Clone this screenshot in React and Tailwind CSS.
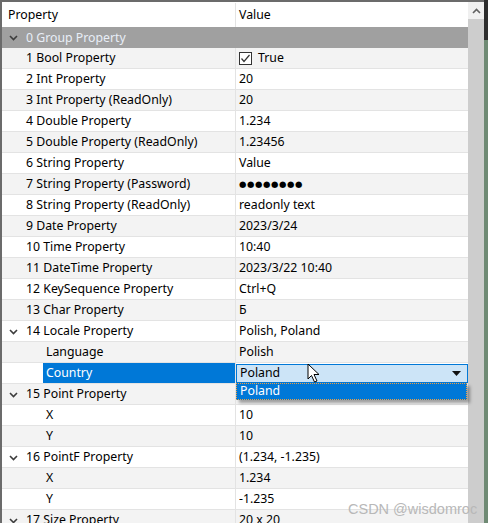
import React from "react";

const Chevron = () => (
  <svg width="9" height="6" viewBox="0 0 9 6" className="shrink-0">
    <polyline points="1,1 4.5,4.5 8,1" fill="none" stroke="#3c3c3c" strokeWidth="1.6" />
  </svg>
);

const rows = [
  { n: "1 Bool Property", v: "bool" },
  { n: "2 Int Property", v: "20" },
  { n: "3 Int Property (ReadOnly)", v: "20" },
  { n: "4 Double Property", v: "1.234" },
  { n: "5 Double Property (ReadOnly)", v: "1.23456" },
  { n: "6 String Property", v: "Value" },
  { n: "7 String Property (Password)", v: "pwd" },
  { n: "8 String Property (ReadOnly)", v: "readonly text" },
  { n: "9 Date Property", v: "2023/3/24" },
  { n: "10 Time Property", v: "10:40" },
  { n: "11 DateTime Property", v: "2023/3/22 10:40" },
  { n: "12 KeySequence Property", v: "Ctrl+Q" },
  { n: "13 Char Property", v: "Б" },
  { n: "14 Locale Property", v: "Polish, Poland", exp: true },
  { n: "Language", v: "Polish", child: true },
  { n: "Country", v: "combo", child: true, sel: true },
  { n: "15 Point Property", v: "", exp: true },
  { n: "X", v: "10", child: true },
  { n: "Y", v: "10", child: true },
  { n: "16 PointF Property", v: "(1.234, -1.235)", exp: true },
  { n: "X", v: "1.234", child: true },
  { n: "Y", v: "-1.235", child: true },
  { n: "17 Size Property", v: "20 x 20", exp: true },
];

function Value({ v }) {
  if (v === "bool")
    return (
      <div className="flex items-center gap-[6px] pl-[3px]">
        <svg width="13" height="13" viewBox="0 0 13 13">
          <rect x="0.5" y="0.5" width="12" height="12" fill="white" stroke="#333" />
          <polyline points="2.5,6.5 5,9.5 10.5,3" fill="none" stroke="#333" strokeWidth="1.2" />
        </svg>
        <span>True</span>
      </div>
    );
  if (v === "pwd")
    return (
      <span className="pl-[3px] text-[8.5px] tracking-[0.6px]" style={{ fontFamily: '"DejaVu Sans", sans-serif' }}>
        ●●●●●●●●
      </span>
    );
  if (v === "combo")
    return (
      <div className="flex h-full flex-1 items-center justify-between border border-[#0078d7] bg-[#cce4f7] pl-[3px] pr-[6px]">
        <span>Poland</span>
        <svg width="9" height="5" viewBox="0 0 9 5">
          <polygon points="0,0 9,0 4.5,5" fill="#111" />
        </svg>
      </div>
    );
  return <span className="pl-[3px]">{v}</span>;
}

export default function App() {
  return (
    <div
      className="flex h-[523px] w-[488px] overflow-hidden bg-[#4b5e50] text-[12.3px] text-black"
      style={{ fontFamily: '"Noto Sans", "Noto Sans CJK SC", sans-serif' }}
    >
      <div className="flex w-[484px] flex-col border-l-2 border-t-2 border-[#6b6b6b] bg-white">
        <div className="flex flex-1 overflow-hidden">
          <div className="relative flex w-[466px] flex-col">
            {/* header */}
            <div className="flex h-[25px] shrink-0 pt-[1px]">
              <div className="flex w-[234px] items-center border-r border-[#e3e3e3] pl-[6px]">Property</div>
              <div className="flex flex-1 items-center pl-[3px]">Value</div>
            </div>
            {/* group */}
            <div className="flex h-[21px] shrink-0 items-center bg-[#a0a0a0] pl-[7px] pt-[1px] text-[#e8eef7]">
              <Chevron />
              <span className="ml-[8px]">0 Group Property</span>
            </div>
            {rows.map((r, i) => (
              <div
                key={i}
                className={`flex h-[21px] shrink-0 border-b border-[#e3e3e3] ${i % 2 === 0 ? "bg-[#f3f3f3]" : "bg-white"}`}
              >
                <div className="flex w-[234px] items-center border-r border-[#e3e3e3]">
                  {r.child ? (
                    <div
                      className={`ml-[41px] flex h-full flex-1 items-center pl-[3px] pt-[1px] ${r.sel ? "bg-[#0078d7] text-white" : ""}`}
                    >
                      {r.n}
                    </div>
                  ) : (
                    <div className="flex items-center pl-[7px] pt-[1px]">
                      {r.exp ? <Chevron /> : <span className="w-[9px]" />}
                      <span className="ml-[8px]">{r.n}</span>
                    </div>
                  )}
                </div>
                <div className="flex flex-1 items-center pt-[1px]">
                  <Value v={r.v} />
                </div>
              </div>
            ))}
            {/* popup */}
            <div className="absolute left-[234px] top-[381px] flex h-[17px] w-[231px] items-center border border-dotted border-[#f0a040] bg-[#0078d7] pl-[3px] text-white shadow-[3px_3px_3px_rgba(0,0,0,0.35)]">
              Poland
            </div>
            {/* cursor */}
            <svg className="absolute left-[305px] top-[361px]" width="14" height="21" viewBox="0 0 14 21">
              <polygon
                points="1,1 1,16 4.5,12.5 7.5,19 10,18 7,11.5 12,11.5"
                fill="white"
                stroke="black"
                strokeWidth="1"
                strokeLinejoin="round"
              />
            </svg>
            {/* watermark */}
            <div
              className="absolute left-[346px] top-[497px] whitespace-nowrap text-[14.5px] text-[#b8b8b8]"
              style={{ fontFamily: '"Liberation Sans", Arial, sans-serif' }}
            >
              CSDN @wisdomroc
            </div>
          </div>
          {/* scrollbar */}
          <div className="flex w-[16px] flex-col bg-[#cdcdcd]">
            <div className="flex h-[17px] items-center justify-center bg-[#f0f0f0]">
              <svg width="9" height="6" viewBox="0 0 9 6">
                <polyline points="1,5 4.5,1.5 8,5" fill="none" stroke="#606060" strokeWidth="1.6" />
              </svg>
            </div>
          </div>
        </div>
      </div>
      <div className="flex w-[4px] flex-col">
        <div className="h-[40px] bg-[#2d2d2d]" />
        <div className="flex-1 bg-[#6f8a74]" />
      </div>
    </div>
  );
}
